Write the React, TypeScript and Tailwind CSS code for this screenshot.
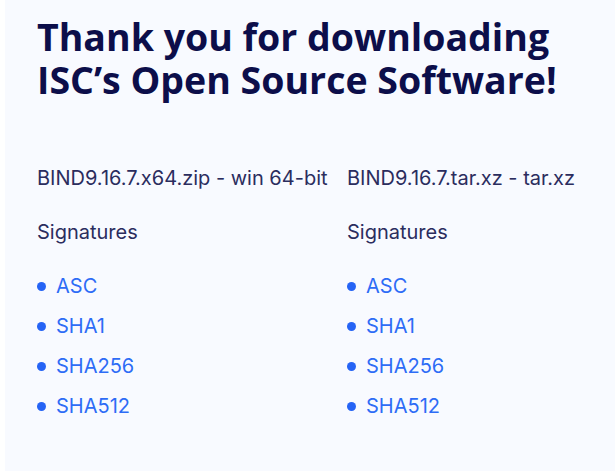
import React from "react";

const links = ["ASC", "SHA1", "SHA256", "SHA512"];

function Column({ title, last }: { title: string; last?: boolean }) {
  return (
    <div className={last ? "flex-1 min-w-0" : "w-[310px] shrink-0"}>
      <p className="text-[20px] leading-[28px] text-[#2b2d5e] whitespace-nowrap">{title}</p>
      <p className="mt-[26px] text-[20px] leading-[28px] text-[#2b2d5e]">Signatures</p>
      <ul className="mt-[26px] flex flex-col gap-[12px]">
        {links.map((l) => (
          <li key={l} className="flex items-center gap-[10px] text-[20px] leading-[28px]">
            <span className="w-[9px] h-[9px] rounded-full bg-[#2563f5] shrink-0" />
            <a href="#" className="text-[#2d6cf6]">{l}</a>
          </li>
        ))}
      </ul>
    </div>
  );
}

export default function App() {
  return (
    <div className="w-[615px] h-[471px] bg-white pl-[5px] overflow-hidden" style={{ fontFamily: "Inter, 'Liberation Sans', sans-serif" }}>
      <div className="h-full bg-[#f8faff] pl-[32px] pt-[15px]">
        <h1
          className="text-[37.5px] leading-[43px] font-bold text-[#0c0e4a] whitespace-nowrap"
          style={{ fontFamily: "'Open Sans', sans-serif" }}
        >
          Thank you for downloading
          <br />
          ISC’s Open Source Software!
        </h1>
        <div className="mt-[63px] flex">
          <Column title="BIND9.16.7.x64.zip - win 64-bit" />
          <Column title="BIND9.16.7.tar.xz - tar.xz" last />
        </div>
      </div>
    </div>
  );
}
